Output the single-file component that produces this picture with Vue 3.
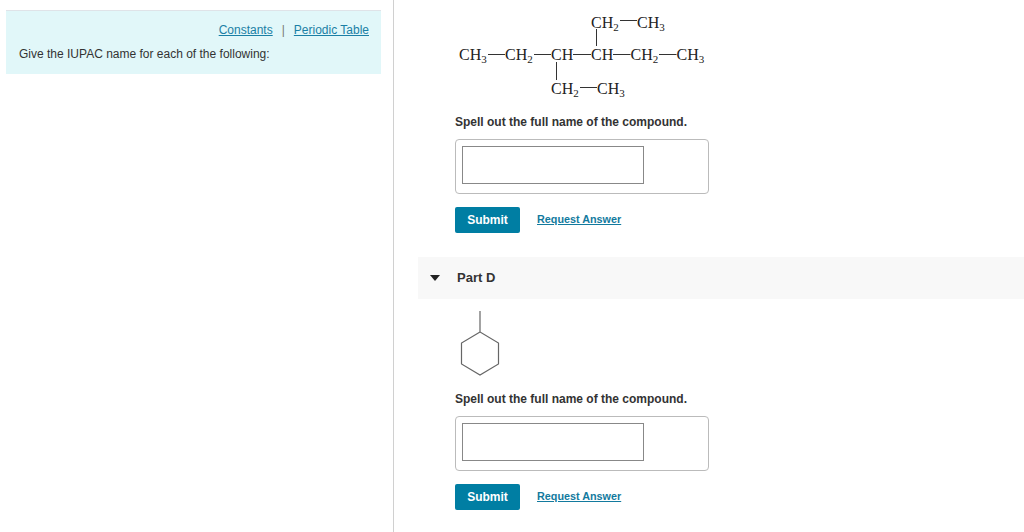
<script setup>
// the two answer blocks share the same form
const prompt = 'Spell out the full name of the compound.'
</script>

<template>
  <div class="page">
    <aside class="left">
      <div class="info">
        <div class="links">
          <a href="#">Constants</a>
          <span class="sep">|</span>
          <a href="#">Periodic Table</a>
        </div>
        <p class="intro">Give the IUPAC name for each of the following:</p>
      </div>
    </aside>

    <main class="right">
      <div class="part">
        <svg class="formula" width="300" height="108" viewBox="0 0 300 108">
          <g class="chem">
            <text x="136" y="27.500">CH<tspan class="sub" dy="3">2</tspan></text>
            <text x="182" y="27.500">CH<tspan class="sub" dy="3">3</tspan></text>
            <text x="4" y="60">CH<tspan class="sub" dy="3">3</tspan></text>
            <text x="50" y="60">CH<tspan class="sub" dy="3">2</tspan></text>
            <text x="96" y="60">CH</text>
            <text x="136" y="60">CH</text>
            <text x="175.500" y="60">CH<tspan class="sub" dy="3">2</tspan></text>
            <text x="221.500" y="60">CH<tspan class="sub" dy="3">3</tspan></text>
            <text x="96" y="94">CH<tspan class="sub" dy="3">2</tspan></text>
            <text x="142" y="94">CH<tspan class="sub" dy="3">3</tspan></text>
          </g>
          <g class="bonds">
            <path d="M165 20.500H182M33 54.500H50M79 54.500H96M118 54.500H136M158 54.500H175.500M204 54.500H221.500M125 87.500H142" />
            <path d="M141.500 29V46M101.500 62V80" />
          </g>
        </svg>
        <p class="prompt prompt-c">{{ prompt }}</p>
        <div class="answer"><div class="field"></div></div>
        <div class="actions">
          <button class="submit">Submit</button>
          <a class="request" href="#">Request Answer</a>
        </div>
      </div>

      <div class="part-head">
        <span class="arrow"></span>
        <span class="part-title">Part D</span>
      </div>

      <div class="part">
        <svg class="ring" width="40" height="66" viewBox="0 0 40 66">
          <path d="M20 1V22L38.500 33V54L20 65L1.500 54V33L20 22" />
        </svg>
        <p class="prompt prompt-d">{{ prompt }}</p>
        <div class="answer"><div class="field"></div></div>
        <div class="actions">
          <button class="submit">Submit</button>
          <a class="request" href="#">Request Answer</a>
        </div>
      </div>
    </main>
  </div>
</template>

<style scoped>
.page {
  display: flex;
  height: 532px;
  overflow: hidden;
  font-family: "Liberation Sans", Arial, sans-serif;
  background: #fff;
}
.left {
  width: 375px;
  flex-shrink: 0;
  border-right: 1px solid #d0d0d0;
  padding: 10px 12px 0 6px;
}
.info {
  height: 64px;
  box-sizing: border-box;
  background: #e1f7f9;
  border-top: 1px solid #dfe3e8;
  padding: 12px 12px 0 13px;
  font-size: 12px;
}
.links {
  display: flex;
  justify-content: flex-end;
  gap: 9px;
  line-height: 14px;
}
.links a {
  color: #1a7fa5;
}
.sep {
  color: #777;
}
.intro {
  margin: 10px 0 0;
  line-height: 14px;
  color: #333;
}
.right {
  flex: 1;
  min-width: 0;
  padding-left: 24px;
}
.part {
  padding-left: 37px;
}
.formula {
  display: block;
}
.chem text {
  font-family: "Liberation Serif", "Times New Roman", serif;
  font-size: 16px;
  fill: #222;
}
.sub {
  font-size: 11px;
}
.bonds path {
  fill: none;
  stroke: #333;
  stroke-width: 1;
}
.prompt {
  margin: 0;
  font-size: 12px;
  font-weight: bold;
  line-height: 14px;
  color: #333;
}
.prompt-c {
  margin-top: 7px;
}
.prompt-d {
  margin-top: 16px;
}
.answer {
  width: 254px;
  height: 55px;
  margin-top: 10px;
  padding: 6px;
  box-sizing: border-box;
  border: 1px solid #bbb;
  border-radius: 4px;
}
.field {
  width: 182px;
  height: 38px;
  box-sizing: border-box;
  border: 1px solid #888;
}
.actions {
  display: flex;
  align-items: center;
  gap: 17px;
  margin-top: 13px;
}
.submit {
  width: 65px;
  height: 26px;
  padding: 0;
  border: none;
  border-radius: 2px;
  background: #007ea3;
  color: #fff;
  font-family: inherit;
  font-size: 12px;
  font-weight: bold;
}
.request {
  margin-bottom: 2px;
  color: #137a9e;
  font-size: 10.800px;
  font-weight: bold;
}
.part-head {
  display: flex;
  align-items: center;
  height: 42px;
  margin-top: 24px;
  background: #f8f8f8;
}
.arrow {
  width: 0;
  height: 0;
  margin-left: 12px;
  border-left: 5.500px solid transparent;
  border-right: 5.500px solid transparent;
  border-top: 6px solid #222;
}
.part-title {
  margin-left: 17px;
  padding-bottom: 1px;
  font-size: 13px;
  font-weight: bold;
  color: #333;
}
.ring {
  display: block;
  margin: 11px 0 0 5px;
}
.ring path {
  fill: none;
  stroke: #666;
  stroke-width: 1.200;
}
</style>
